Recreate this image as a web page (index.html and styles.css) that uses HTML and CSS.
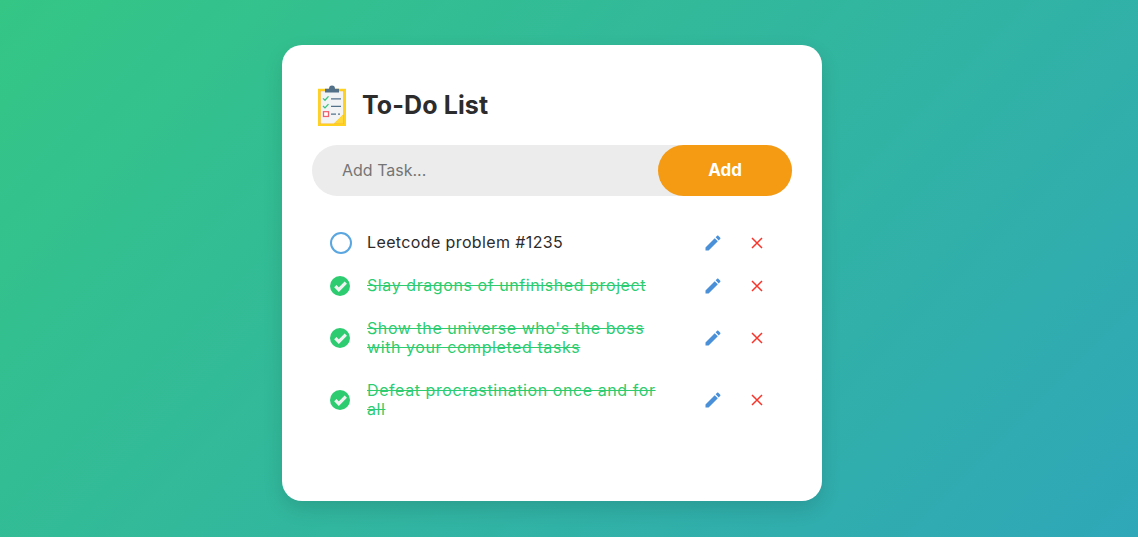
FILE: index.html
```html
<!DOCTYPE html>
<html lang="en">
<head>
    <meta charset="UTF-8">
    <meta name="viewport" content="width=device-width, initial-scale=1.0">
    <title>To-Do List</title>
    <link rel="stylesheet" href="styles.css">
</head>
<body>
    <div class="card">
        <div class="heading">
            <svg class="logo" width="40" height="42" viewBox="0 0 40 44" preserveAspectRatio="none">
                <rect x="6" y="5" width="28" height="39" fill="#ffd21f"/>
                <rect x="8" y="7" width="24" height="35" fill="#f8b62d"/>
                <path d="M8.700 7.700H31.300V32L22 41.300H8.700Z" fill="#f1f3f4"/>
                <path d="M31.300 32V41.300H22Z" fill="#ffd83b"/>
                <path d="M13 5H17Q17 1.500 20 1.500T23 5H27V9H13Z" fill="#54718a"/>
                <path d="M11 15L13 17L16.500 13M11 23L13 25L16.500 21" fill="none" stroke="#3cc47c" stroke-width="1.300"/>
                <path d="M19 15.500H29M19 23.500H29" stroke="#54718a" stroke-width="1.300"/>
                <rect x="11.500" y="29" width="5" height="5" fill="#fff" stroke="#f0616d" stroke-width="1.300"/>
                <path d="M19 31.500H24M26 31.500H28" stroke="#54718a" stroke-width="1.300"/>
            </svg>
            <h1>To-Do List</h1>
        </div>

        <div class="add-row">
            <input type="text" class="task-input" placeholder="Add Task...">
            <button class="add-btn">Add</button>
        </div>

        <ul class="tasks">
            <li class="task">
                <span class="circle"></span>
                <span class="task-text">Leetcode problem #1235</span>
                <svg class="edit" width="20" height="20" viewBox="0 0 24 24"><path d="M3 17.250V21h3.750L17.810 9.940l-3.750-3.750L3 17.250zM20.710 7.040c.39-.39.39-1.020 0-1.410l-2.340-2.340c-.39-.39-1.020-.39-1.410 0l-1.830 1.830 3.750 3.750 1.830-1.830z"/></svg>
                <svg class="remove" width="20" height="20" viewBox="0 0 24 24"><path d="M6 6L18 18M18 6L6 18"/></svg>
            </li>
            <li class="task done">
                <svg class="tick" width="22" height="22" viewBox="0 0 22 22"><circle cx="10" cy="11" r="10" fill="#2ecc71"/><path d="M5.300 11.200L8.800 14.700L15.800 7.600" fill="none" stroke="#f2f2f2" stroke-width="3.200"/></svg>
                <span class="task-text">Slay dragons of unfinished project</span>
                <svg class="edit" width="20" height="20" viewBox="0 0 24 24"><path d="M3 17.250V21h3.750L17.810 9.940l-3.750-3.750L3 17.250zM20.710 7.040c.39-.39.39-1.020 0-1.410l-2.340-2.340c-.39-.39-1.020-.39-1.410 0l-1.830 1.830 3.750 3.750 1.830-1.830z"/></svg>
                <svg class="remove" width="20" height="20" viewBox="0 0 24 24"><path d="M6 6L18 18M18 6L6 18"/></svg>
            </li>
            <li class="task done">
                <svg class="tick" width="22" height="22" viewBox="0 0 22 22"><circle cx="10" cy="11" r="10" fill="#2ecc71"/><path d="M5.300 11.200L8.800 14.700L15.800 7.600" fill="none" stroke="#f2f2f2" stroke-width="3.200"/></svg>
                <span class="task-text">Show the universe who's the boss with your completed tasks</span>
                <svg class="edit" width="20" height="20" viewBox="0 0 24 24"><path d="M3 17.250V21h3.750L17.810 9.940l-3.750-3.750L3 17.250zM20.710 7.040c.39-.39.39-1.020 0-1.410l-2.340-2.340c-.39-.39-1.020-.39-1.410 0l-1.830 1.830 3.750 3.750 1.830-1.830z"/></svg>
                <svg class="remove" width="20" height="20" viewBox="0 0 24 24"><path d="M6 6L18 18M18 6L6 18"/></svg>
            </li>
            <li class="task done">
                <svg class="tick" width="22" height="22" viewBox="0 0 22 22"><circle cx="10" cy="11" r="10" fill="#2ecc71"/><path d="M5.300 11.200L8.800 14.700L15.800 7.600" fill="none" stroke="#f2f2f2" stroke-width="3.200"/></svg>
                <span class="task-text">Defeat procrastination once and for all</span>
                <svg class="edit" width="20" height="20" viewBox="0 0 24 24"><path d="M3 17.250V21h3.750L17.810 9.940l-3.750-3.750L3 17.250zM20.710 7.040c.39-.39.39-1.020 0-1.410l-2.340-2.340c-.39-.39-1.020-.39-1.410 0l-1.830 1.830 3.750 3.750 1.830-1.830z"/></svg>
                <svg class="remove" width="20" height="20" viewBox="0 0 24 24"><path d="M6 6L18 18M18 6L6 18"/></svg>
            </li>
        </ul>
    </div>
</body>
</html>
```

FILE: styles.css
```css
* {
    box-sizing: border-box;
}
body {
    font-family: Inter, "Liberation Sans", sans-serif;
    margin: 0;
    height: 537px;
    overflow: hidden;
    padding: 45px 0 0 282px;
    background: linear-gradient(135deg, #34c685, #2fa7b8);
}
.card {
    width: 540px;
    height: 456px;
    background: #fff;
    border-radius: 20px;
    padding: 39px 30px 0;
    box-shadow: 0 8px 20px rgba(0, 0, 0, 0.12);
}
.heading {
    display: flex;
    align-items: center;
    gap: 10px;
    height: 42px;
    margin-bottom: 19px;
}
.heading h1 {
    margin: 0;
    font-size: 25px;
    font-weight: 700;
    letter-spacing: 0.1px;
    color: #2c2c2c;
}
.logo {
    display: block;
}
.add-row {
    display: flex;
    height: 51px;
    background: #ececec;
    border-radius: 30px;
}
.task-input {
    flex: 1;
    min-width: 0;
    border: none;
    outline: none;
    background: transparent;
    padding: 0 30px 2px;
    font: inherit;
    font-size: 16px;
    color: #333;
}
.task-input::placeholder {
    color: #757575;
}
.add-btn {
    width: 134px;
    border: none;
    border-radius: 30px;
    background: #f49a13;
    color: #fff;
    padding-bottom: 2px;
    font: inherit;
    font-size: 17px;
    font-weight: 700;
    cursor: pointer;
}
.tasks {
    list-style: none;
    margin: 25px 0 0;
    padding: 0;
}
.task {
    display: flex;
    align-items: center;
    padding: 12px 18px;
    font-size: 16px;
    line-height: 19px;
    color: #2c2c2c;
}
.circle {
    flex: none;
    width: 22px;
    height: 22px;
    margin: -2px 0;
    border: 2px solid #5aa6e0;
    border-radius: 50%;
}
.tick {
    flex: none;
    margin: -2px 0;
}
.task-text {
    flex: none;
    width: 321px;
    margin-left: 15px;
    padding-right: 25px;
    letter-spacing: 0.38px;
}
.done .task-text {
    color: #2ecc71;
    letter-spacing: 0.58px;
    text-decoration: line-through;
}
.edit {
    flex: none;
    margin: -1px 0 -1px 15px;
    fill: #4a90d9;
}
.remove {
    flex: none;
    margin: -1px 0 -1px 24px;
    fill: none;
    stroke: #f8352b;
    stroke-width: 1.800;
}
```
